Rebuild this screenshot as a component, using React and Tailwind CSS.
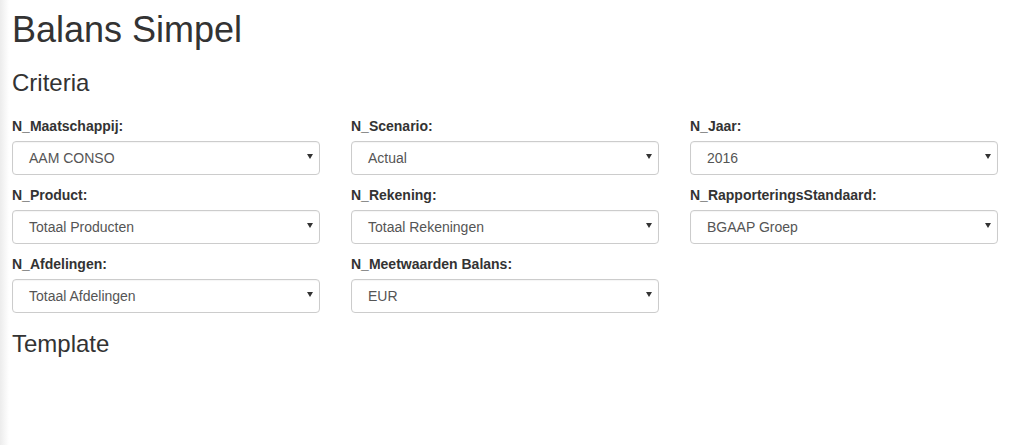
import React from "react";

const fields = [
  { label: "N_Maatschappij:", value: "AAM CONSO" },
  { label: "N_Scenario:", value: "Actual" },
  { label: "N_Jaar:", value: "2016" },
  { label: "N_Product:", value: "Totaal Producten" },
  { label: "N_Rekening:", value: "Totaal Rekeningen" },
  { label: "N_RapporteringsStandaard:", value: "BGAAP Groep" },
  { label: "N_Afdelingen:", value: "Totaal Afdelingen" },
  { label: "N_Meetwaarden Balans:", value: "EUR" },
];

function SelectBox({ value }) {
  return (
    <div className="flex h-[34px] items-center justify-between rounded-[4px] border border-[#cccccc] bg-white pl-4 pr-[6px] text-[14px] text-[#555555] shadow-[inset_0_1px_1px_rgba(0,0,0,0.04)]">
      <span className="pt-px">{value}</span>
      <svg width="6" height="5" viewBox="0 0 6 5" className="mb-[3px] text-[#333]">
        <path d="M0 0 L6 0 L3 5 Z" fill="currentColor" />
      </svg>
    </div>
  );
}

export default function App() {
  return (
    <div className="min-h-[445px] w-full bg-[linear-gradient(to_right,#ececec_0px,#ffffff_9px)] font-['Liberation_Sans',Arial,sans-serif] text-[#333333]">
      <div className="pl-3 pt-[10px]">
        <h1 className="text-[36px] leading-[1.1]">Balans Simpel</h1>
        <h3 className="mt-5 text-[24px] leading-[1.1]">Criteria</h3>

        <div className="mt-5 grid w-[986px] grid-cols-[308px_308px_308px] gap-x-[31px] gap-y-[10px]">
          {fields.map((f) => (
            <div key={f.label} className="flex flex-col">
              <label className="mb-[5px] text-[14px] font-bold leading-[20px]">{f.label}</label>
              <SelectBox value={f.value} />
            </div>
          ))}
        </div>

        <h3 className="mt-[18px] text-[24px] leading-[1.1]">Template</h3>
      </div>
    </div>
  );
}
